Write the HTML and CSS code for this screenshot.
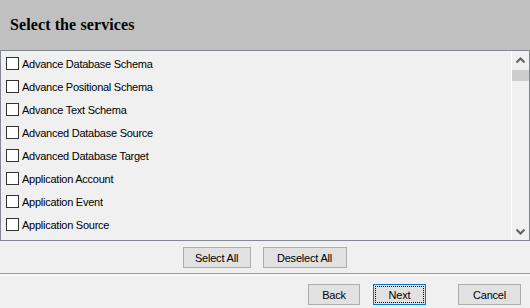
FILE: index.html
```html
<!DOCTYPE html>
<html>
<head>
<meta charset="utf-8">
<link rel="stylesheet" href="styles.css">
</head>
<body>
<div class="dialog">
  <div class="header"><h1 class="title">Select the services</h1></div>
  <div class="listbox">
    <ul class="items">
      <li class="item"><span class="check"></span><span class="label">Advance Database Schema</span></li>
      <li class="item"><span class="check"></span><span class="label">Advance Positional Schema</span></li>
      <li class="item"><span class="check"></span><span class="label">Advance Text Schema</span></li>
      <li class="item"><span class="check"></span><span class="label">Advanced Database Source</span></li>
      <li class="item"><span class="check"></span><span class="label">Advanced Database Target</span></li>
      <li class="item"><span class="check"></span><span class="label">Application Account</span></li>
      <li class="item"><span class="check"></span><span class="label">Application Event</span></li>
      <li class="item"><span class="check"></span><span class="label">Application Source</span></li>
    </ul>
    <div class="scrollbar">
      <div class="arrow">
        <svg width="9" height="6" viewBox="0 0 9 6"><path d="M0.5 5.5 L4.5 1.5 L8.5 5.5" fill="none" stroke="#606060" stroke-width="2"/></svg>
      </div>
      <div class="thumb"></div>
      <div class="track"></div>
      <div class="arrow">
        <svg width="9" height="6" viewBox="0 0 9 6"><path d="M0.5 0.5 L4.5 4.5 L8.5 0.5" fill="none" stroke="#606060" stroke-width="2"/></svg>
      </div>
    </div>
  </div>
  <div class="select-row">
    <button class="btn btn-select">Select All</button>
    <button class="btn btn-deselect">Deselect All</button>
  </div>
  <div class="separator"></div>
  <div class="nav-row">
    <button class="btn btn-back">Back</button>
    <button class="btn btn-next"><span class="focus">Next</span></button>
    <button class="btn btn-cancel">Cancel</button>
  </div>
</div>
</body>
</html>
```
FILE: styles.css
```css
html, body {
  margin: 0;
  padding: 0;
  background: #f0f0f0;
}
.dialog {
  width: 530px;
  height: 308px;
  background: #f0f0f0;
  font-family: "Liberation Sans", Arial, sans-serif;
  font-size: 11px;
  color: #000;
}
.header {
  height: 50px;
  background: #c0c0c0;
  box-sizing: border-box;
  padding: 15px 0 0 10px;
}
.title {
  margin: 0;
  font-family: "Liberation Serif", "Times New Roman", serif;
  font-weight: bold;
  font-size: 16px;
  line-height: 20px;
  letter-spacing: 0.1px;
}
.listbox {
  height: 191px;
  box-sizing: border-box;
  border: 1px solid #828790;
  display: flex;
  background: #f0f0f0;
}
.items {
  list-style: none;
  margin: 0;
  padding: 1px 0 0 5px;
  flex: 1;
}
.item {
  height: 23px;
  display: flex;
  align-items: center;
}
.check {
  width: 13px;
  height: 13px;
  box-sizing: border-box;
  border: 1px solid #333;
  background: #fff;
  margin-right: 3px;
  margin-top: -1px;
}
.label {
  font-size: 11px;
  letter-spacing: -0.25px;
  white-space: nowrap;
  color: #000;
}
.scrollbar {
  width: 17px;
  border-left: 1px solid #fff;
  display: flex;
  flex-direction: column;
}
.arrow {
  height: 17px;
  display: flex;
  align-items: center;
  justify-content: center;
}
.thumb {
  height: 11px;
  margin: 2px 0 0 0;
  background: #cdcdcd;
}
.track {
  flex: 1;
}
.btn {
  font-family: "Liberation Sans", Arial, sans-serif;
  font-size: 11px;
  letter-spacing: -0.2px;
  height: 21px;
  padding: 0;
  background: #e1e1e1;
  border: 1px solid #adadad;
  color: #000;
  box-sizing: border-box;
}
.select-row {
  display: flex;
  justify-content: center;
  gap: 12px;
  padding: 6px 0 0 0;
  height: 32px;
  box-sizing: border-box;
}
.btn-select { width: 68px; margin-left: -1px; }
.btn-deselect { width: 84px; }
.separator {
  border-top: 1px solid #a0a0a0;
  border-bottom: 1px solid #fff;
  box-sizing: border-box;
  height: 3px;
}
.nav-row {
  display: flex;
  justify-content: flex-end;
  padding: 8px 9px 0 0;
}
.btn-back { width: 52px; }
.btn-next {
  width: 53px;
  margin-left: 13px;
  border-color: #0078d7;
  padding: 1px;
}
.btn-next .focus {
  display: flex;
  align-items: center;
  justify-content: center;
  height: 100%;
  border: 1px dotted #000;
  box-sizing: border-box;
}
.btn-cancel {
  width: 63px;
  margin-left: 32px;
}
```
